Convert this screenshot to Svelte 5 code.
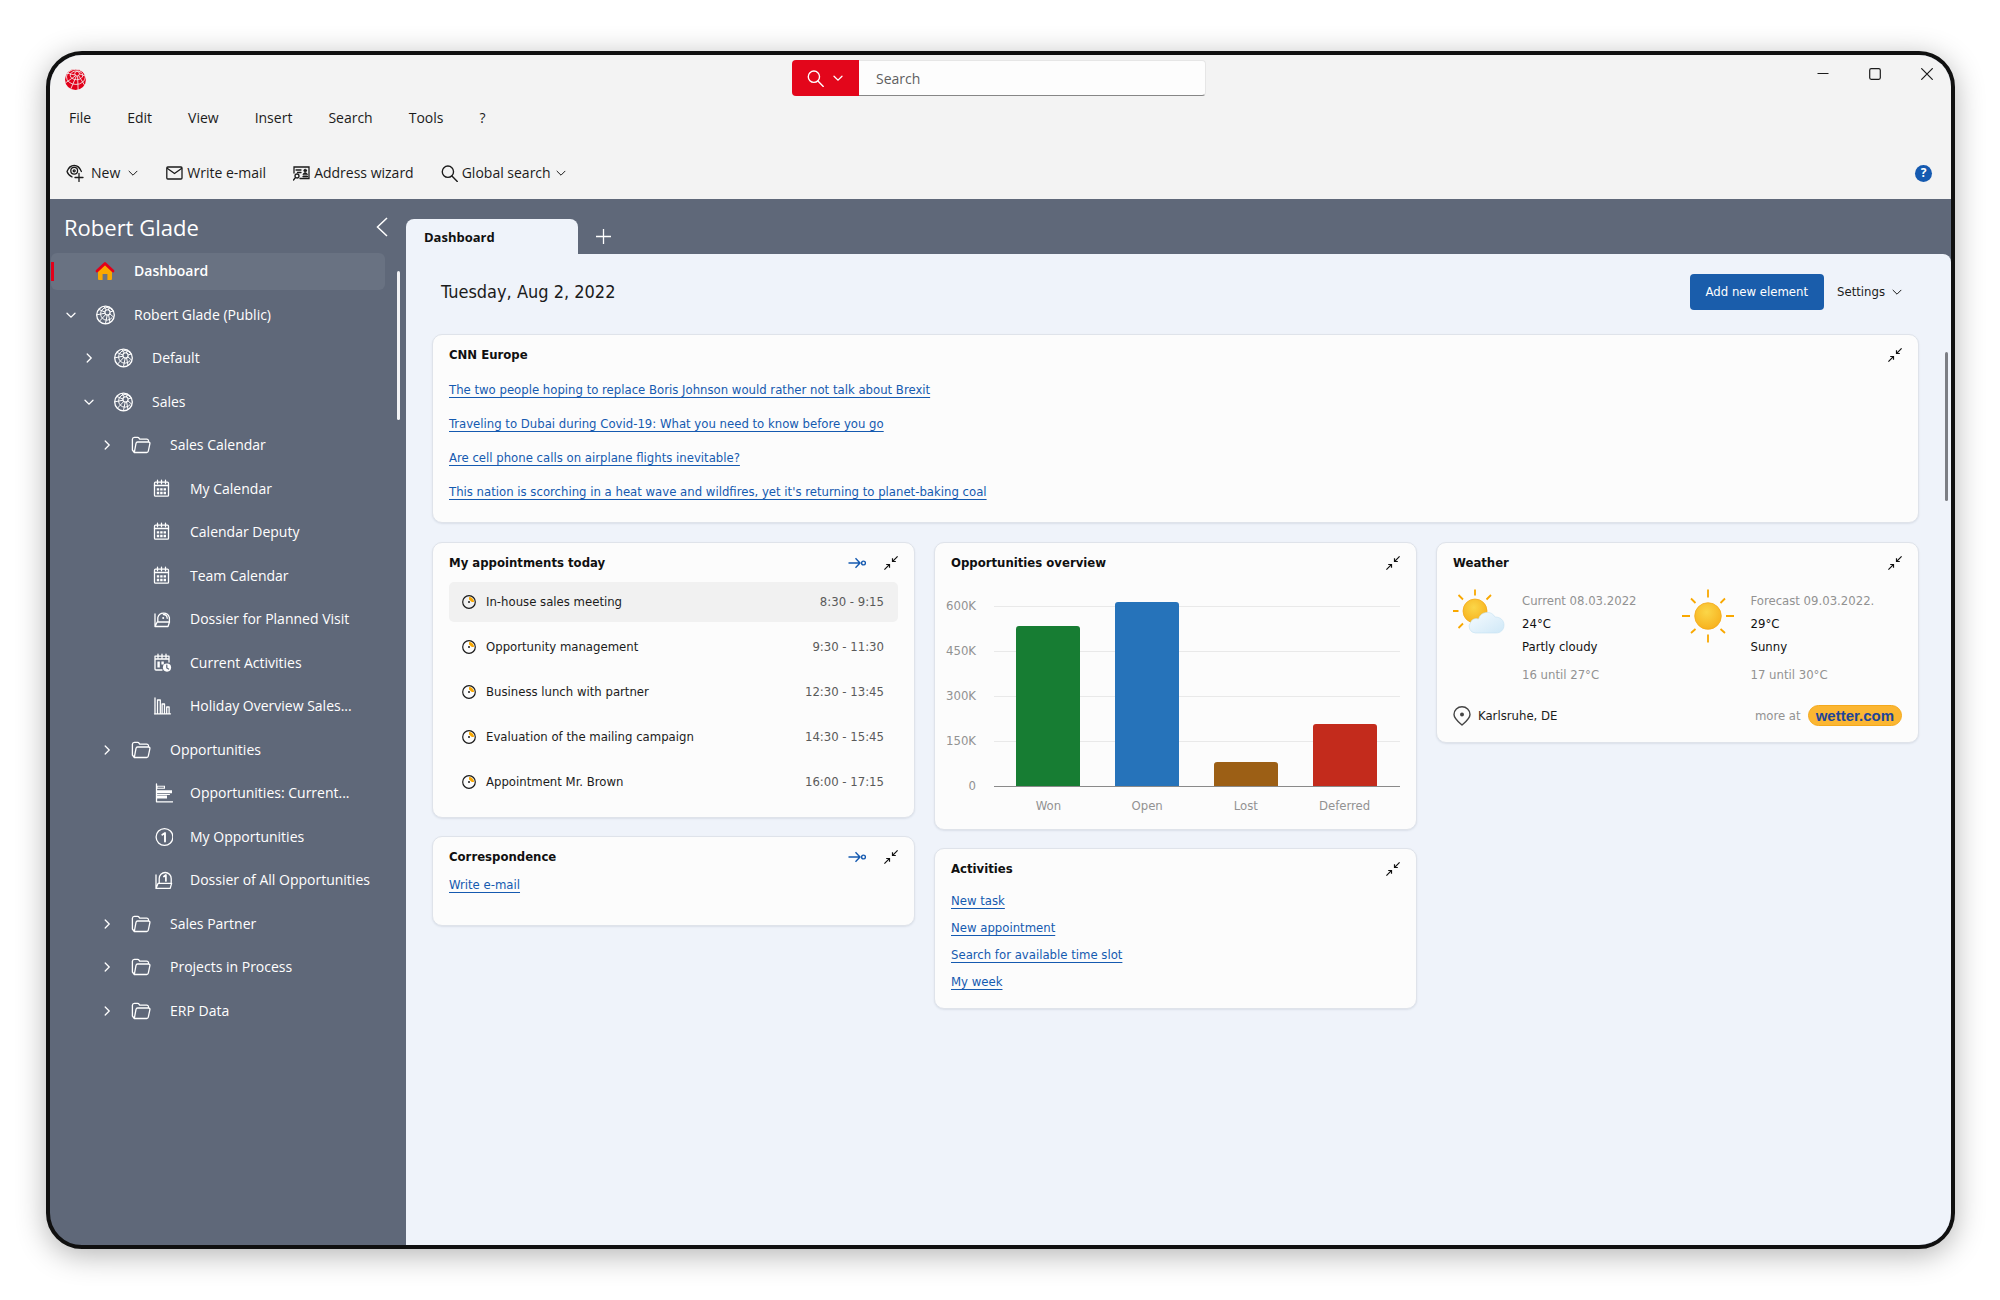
<script lang="ts">
	type IconName =
		| 'home'
		| 'globe'
		| 'folder'
		| 'calendar'
		| 'dossier'
		| 'activities'
		| 'columns'
		| 'bars'
		| 'one'
		| 'dossierOne';

	interface TreeItem {
		label: string;
		icon: IconName;
		level: number;
		state?: 'open' | 'closed';
	}

	const menu = ['File', 'Edit', 'View', 'Insert', 'Search', 'Tools', '?'];

	const tree: TreeItem[] = [
		{ label: 'Dashboard', icon: 'home', level: 0 },
		{ label: 'Robert Glade (Public)', icon: 'globe', level: 0, state: 'open' },
		{ label: 'Default', icon: 'globe', level: 1, state: 'closed' },
		{ label: 'Sales', icon: 'globe', level: 1, state: 'open' },
		{ label: 'Sales Calendar', icon: 'folder', level: 2, state: 'closed' },
		{ label: 'My Calendar', icon: 'calendar', level: 3 },
		{ label: 'Calendar Deputy', icon: 'calendar', level: 3 },
		{ label: 'Team Calendar', icon: 'calendar', level: 3 },
		{ label: 'Dossier for Planned Visit', icon: 'dossier', level: 3 },
		{ label: 'Current Activities', icon: 'activities', level: 3 },
		{ label: 'Holiday Overview Sales...', icon: 'columns', level: 3 },
		{ label: 'Opportunities', icon: 'folder', level: 2, state: 'closed' },
		{ label: 'Opportunities: Current...', icon: 'bars', level: 3 },
		{ label: 'My Opportunities', icon: 'one', level: 3 },
		{ label: 'Dossier of All Opportunities', icon: 'dossierOne', level: 3 },
		{ label: 'Sales Partner', icon: 'folder', level: 2, state: 'closed' },
		{ label: 'Projects in Process', icon: 'folder', level: 2, state: 'closed' },
		{ label: 'ERP Data', icon: 'folder', level: 2, state: 'closed' }
	];

	const news = [
		'The two people hoping to replace Boris Johnson would rather not talk about Brexit',
		'Traveling to Dubai during Covid-19: What you need to know before you go',
		'Are cell phone calls on airplane flights inevitable?',
		"This nation is scorching in a heat wave and wildfires, yet it's returning to planet-baking coal"
	];

	const appointments = [
		{ title: 'In-house sales meeting', time: '8:30 - 9:15' },
		{ title: 'Opportunity management', time: '9:30 - 11:30' },
		{ title: 'Business lunch with partner', time: '12:30 - 13:45' },
		{ title: 'Evaluation of the mailing campaign', time: '14:30 - 15:45' },
		{ title: 'Appointment Mr. Brown', time: '16:00 - 17:15' }
	];

	const axis = ['600K', '450K', '300K', '150K', '0'];
	const chartMax = 600;
	const bars = [
		{ label: 'Won', value: 533, color: '#177d33' },
		{ label: 'Open', value: 614, color: '#2673ba' },
		{ label: 'Lost', value: 80, color: '#9c5f15' },
		{ label: 'Deferred', value: 207, color: '#c32b1c' }
	];

	const activities = ['New task', 'New appointment', 'Search for available time slot', 'My week'];

	let selected = $state('Dashboard');
	let activeAppointment = $state(0);
	let query = $state('');
</script>

{#snippet chevron(dir: 'down' | 'right', cls: string)}
	<svg class={cls} viewBox="0 0 12 12" width="12" height="12" aria-hidden="true">
		<path d={dir === 'down' ? 'M2 4.2 6 8.2 10 4.2' : 'M4.2 2 8.2 6 4.2 10'} />
	</svg>
{/snippet}

{#snippet magnifier(size: number)}
	<svg class="line" viewBox="0 0 16 16" width={size} height={size} aria-hidden="true">
		<circle cx="6.5" cy="6.3" r="5.3" />
		<path d="m10.3 10.3 5 5.2" />
	</svg>
{/snippet}

{#snippet treeIcon(name: IconName)}
	<svg class="tree-icon" viewBox="0 0 20 20" width="20" height="20" aria-hidden="true">
		{#if name === 'home'}
			<path d="M3 10 10 3.5 17 10v8a1 1 0 0 1-1 1h-3.6v-6H7.6v6H4a1 1 0 0 1-1-1z" fill="#f9a800" stroke="none" />
			<path d="M2 10 10 2.4l8 7.6" stroke="#e2001a" stroke-width="2.8" />
		{:else if name === 'globe'}
			<circle cx="10.5" cy="10" r="8.8" />
			<circle cx="12.5" cy="7.4" r="2.6" stroke-width="1.1" />
			<path
				d="M17.4 5.4a6.4 6.4 0 1 0-.4 7.4M9.9 7 4 4.5M9.9 8.2 1.9 9.8M10.8 9.4l-6 6.4M12.2 10.1l-1.7 8.4M13.6 9.9l1.4 7.5M14.8 8.8l3.7 3.2M15.1 7l3-1M13.4 4.9l1-2.8M11.3 5 9 1.6"
				stroke-width="1"
			/>
		{:else if name === 'folder'}
			<path
				d="M3.3 17.5 1.4 15V4.2A2 2 0 0 1 3.4 2.3h3.2q1 0 1.6 1l.5.8h7a1.8 1.8 0 0 1 1.8 1.8v1M3.3 17.5h12.4a1.7 1.7 0 0 0 1.6-1.3l1.6-7.5A1.4 1.4 0 0 0 17.5 7H6.6A1.7 1.7 0 0 0 5 8.3z"
			/>
		{:else if name === 'calendar'}
			<rect x="1.5" y="3.2" width="14" height="14" rx="1" />
			<path d="M1.5 6.5h14M4.5 1.2v3.5M8.5 1.2v3.5M12.5 1.2v3.5" />
			<path
				d="M3.8 10.4h2.4m1 0h2.4m1 0h2.4M3.8 14h2.4m1 0h2.4m1 0h2.4"
				stroke-width="2.4"
				stroke-linecap="butt"
			/>
		{:else if name === 'dossier'}
			<path d="M2 5v12.5h13L16.5 13H4.2L2.3 17M4.8 13V8.6a6 6 0 0 1 11.6 0V13" />
			<path d="M10.4 5.5a4 4 0 0 1 3.8 3.8" />
			<circle cx="10.2" cy="8.9" r="1" fill="currentColor" stroke="none" />
		{:else if name === 'activities'}
			<path d="M9 17H3a1 1 0 0 1-1-1V3.2h14V9M2 6h14M5 1.2v3.5M9 1.2v3.5M13 1.2v3.5" />
			<path d="M5.6 8.5v6M9.6 8.5v3" stroke-width="2.4" stroke-linecap="butt" />
			<circle cx="14" cy="14.6" r="4.1" fill="currentColor" stroke="none" />
			<path d="M13.8 12.2V15l1.8 1" stroke="#5f6879" stroke-width="1.2" />
		{:else if name === 'columns'}
			<path d="M2 2v16M1.5 17.8h16M4.5 17.5V4h2.8v13.5M9.1 17.5V8h2.4v9.5M13.7 17.5V11h2.4v6.5" />
		{:else if name === 'bars'}
			<path d="M3.5 1v17.8h16" />
			<path d="M4 4.2h8M4 8.8h15M4 14h10" stroke-width="3" stroke-linecap="butt" />
			<path d="M5 4.2h5.5" stroke="#5f6879" stroke-width="1" />
			<path d="M3.5 11.5h13" stroke-width="1" />
		{:else if name === 'one'}
			<circle cx="11.5" cy="10" r="8.4" />
			<path d="M9.3 7.8 12 6v8.5" stroke-width="1.9" />
		{:else if name === 'dossierOne'}
			<path d="M3 5v13.4h14.2l1.4-5H5L3.2 18M6.2 13V8.5a6 6 0 0 1 12 0V13" />
			<path d="m10.9 6.5 2-1.5v6" stroke-width="1.7" />
		{/if}
	</svg>
{/snippet}

{#snippet cardHead(title: string, linked: boolean)}
	<header class="card-head">
		<h2>{title}</h2>
		{#if linked}
			<button class="icon-button linked" aria-label="Open {title}">
				<svg viewBox="0 0 18 12" width="18" height="12" aria-hidden="true">
					<path d="M.5 6H12M7.5 1.2 12 6l-4.5 4.8" />
					<circle cx="15.5" cy="6" r="1.9" />
				</svg>
			</button>
		{/if}
		<button class="icon-button" aria-label="Collapse {title}">
			<svg viewBox="0 0 14 14" width="14" height="14" aria-hidden="true">
				<path d="M13.6.4 8.7 5.3M8.5 2.2v3.3h3.3M.4 13.6l4.9-4.9M2.2 8.5h3.3v3.3" />
			</svg>
		</button>
	</header>
{/snippet}

<div class="window">
	<header class="top">
		<div class="titlebar">
			<svg class="logo" viewBox="0 0 20 20" width="21" height="21" aria-hidden="true">
				<circle cx="10" cy="10" r="10" fill="#e2001a" />
				<g fill="none" stroke="#f3f3f3" stroke-width=".8">
					<circle cx="11.5" cy="4.5" r="2.2" />
					<ellipse cx="11" cy="6" rx="6" ry="4.2" />
					<ellipse cx="10.4" cy="7.5" rx="9" ry="7.2" />
					<path d="M10 5.8 2 4M10 6.5.8 13M10.800 6.800 5.500 19M12 6.800 12.500 20M13 6.200l5.500 9M13.500 4.500 20 7" />
				</g>
			</svg>

			<form class="search" role="search" onsubmit={(e) => e.preventDefault()}>
				<button type="submit" aria-label="Search options">
					{@render magnifier(17)}
					{@render chevron('down', 'line')}
				</button>
				<input type="text" placeholder="Search" aria-label="Search" bind:value={query} />
			</form>

			<div class="window-buttons">
				<button aria-label="Minimize">
					<svg viewBox="0 0 12 12" width="12" height="12"><path d="M.5 5.5h11" /></svg>
				</button>
				<button aria-label="Maximize">
					<svg viewBox="0 0 12 12" width="12" height="12">
						<rect x=".7" y=".7" width="10.6" height="10.6" rx="1.5" />
					</svg>
				</button>
				<button aria-label="Close">
					<svg viewBox="0 0 12 12" width="12" height="12"><path d="m.3.3 11.4 11.4M11.7.3.3 11.7" /></svg>
				</button>
			</div>
		</div>

		<nav class="menubar" aria-label="Menu">
			{#each menu as entry}
				<button>{entry}</button>
			{/each}
		</nav>

		<div class="toolbar">
			<button class="new">
				<svg class="line" viewBox="0 0 18 18" width="18" height="18" aria-hidden="true">
					<path d="M1 7.5C2.5 3.5 5.2 1.5 8.2 1.5s5.600 2 7.200 6M1 7.500c1 2.800 2.800 4.500 5 5.400" />
					<circle cx="8.2" cy="6.8" r="3.4" />
					<circle cx="8.2" cy="6.8" r="1" />
					<path d="M13 9.5v8M9 13.5h8" />
				</svg>
				New
				{@render chevron('down', 'line thin')}
			</button>
			<button>
				<svg class="line" viewBox="0 0 17 14" width="17" height="14" aria-hidden="true">
					<rect x=".8" y="1" width="15.2" height="12" rx="1" />
					<path d="m1.5 2.5 7 5 7-5" />
				</svg>
				Write e-mail
			</button>
			<button>
				<svg class="line" viewBox="0 0 17 16" width="17" height="16" aria-hidden="true">
					<path d="M1 8V2h15v11.5H7M3 5h5M4.5 7.5H8M10 11.5h4.5" />
					<path d="M10 9.5c0-2.500 4.400-2.500 4.400 0z" fill="currentColor" stroke-width=".8" />
					<circle cx="12.2" cy="5.6" r="1.4" fill="currentColor" stroke-width=".8" />
					<circle cx="4" cy="11" r="2" />
					<path d="m2.500 12.500-2 2.500" />
				</svg>
				Address wizard
			</button>
			<button>
				{@render magnifier(17)}
				Global search
				{@render chevron('down', 'line thin')}
			</button>
			<button class="help" aria-label="Help">?</button>
		</div>
	</header>

	<div class="body">
		<aside class="sidebar">
			<div class="sidebar-head">
				<h1>Robert Glade</h1>
				<button aria-label="Collapse sidebar">
					<svg viewBox="0 0 12 20" width="12" height="20"><path d="M11 1 1.5 10l9.5 9" /></svg>
				</button>
			</div>
			<ul class="tree">
				{#each tree as item}
					<li>
						<button
							class="tree-row level-{item.level}"
							class:selected={selected === item.label}
							onclick={() => (selected = item.label)}
						>
							<span class="twist">
								{#if item.state}
									{@render chevron(item.state === 'open' ? 'down' : 'right', 'line')}
								{/if}
							</span>
							{@render treeIcon(item.icon)}
							<span class="tree-label">{item.label}</span>
						</button>
					</li>
				{/each}
			</ul>
			<div class="scroll-thumb side-thumb"></div>
		</aside>

		<div class="workspace">
			<div class="tabs" role="tablist">
				<button class="tab" role="tab" aria-selected="true">Dashboard</button>
				<button class="add-tab" aria-label="New tab">
					<svg viewBox="0 0 15 15" width="15" height="15"><path d="M7.5 0v15M0 7.5h15" /></svg>
				</button>
			</div>

			<main>
				<div class="page-head">
					<p class="date">Tuesday, Aug 2, 2022</p>
					<button class="primary">Add new element</button>
					<button class="settings">
						Settings
						{@render chevron('down', 'line thin')}
					</button>
				</div>

				<section class="card">
					{@render cardHead('CNN Europe', false)}
					<ul class="links">
						{#each news as item}
							<li><a href="#news">{item}</a></li>
						{/each}
					</ul>
				</section>

				<div class="columns">
					<div class="column">
						<section class="card">
							{@render cardHead('My appointments today', true)}
							<ul class="appointments">
								{#each appointments as item, i}
									<li>
										<button class:active={activeAppointment === i} onclick={() => (activeAppointment = i)}>
											<svg viewBox="0 0 14 14" width="14" height="14" aria-hidden="true">
												<path d="M7 2a5 5 0 0 1 5 5H9.8L7 4.5z" fill="#f9a800" />
												<circle cx="7" cy="7" r="6.3" fill="none" stroke="#1b1b1b" stroke-width="1.2" />
												<circle cx="7" cy="7" r="1" fill="#1b1b1b" />
											</svg>
											<span class="what">{item.title}</span>
											<span class="time">{item.time}</span>
										</button>
									</li>
								{/each}
							</ul>
						</section>

						<section class="card">
							{@render cardHead('Correspondence', true)}
							<ul class="links single">
								<li><a href="#mail">Write e-mail</a></li>
							</ul>
						</section>
					</div>

					<div class="column">
						<section class="card">
							{@render cardHead('Opportunities overview', false)}
							<div class="chart">
								<div class="axis">
									{#each axis as tick}
										<span>{tick}</span>
									{/each}
								</div>
								<div class="plot">
									{#each bars as bar}
										<div class="slot">
											<div class="bar" style="height: {(bar.value / chartMax) * 100}%; background: {bar.color}"></div>
										</div>
									{/each}
								</div>
								<div class="bar-labels">
									{#each bars as bar}
										<span>{bar.label}</span>
									{/each}
								</div>
							</div>
						</section>

						<section class="card">
							{@render cardHead('Activities', false)}
							<ul class="links tight">
								{#each activities as item}
									<li><a href="#activity">{item}</a></li>
								{/each}
							</ul>
						</section>
					</div>

					<div class="column">
						<section class="card">
							{@render cardHead('Weather', false)}
							<div class="weather">
								<div class="report">
									<svg viewBox="0 0 52 54" width="52" height="54" aria-hidden="true">
										<defs>
											<radialGradient id="sun" cx=".45" cy=".35" r=".65">
												<stop offset="0" stop-color="#fbd648" />
												<stop offset="1" stop-color="#f7b21f" />
											</radialGradient>
											<linearGradient id="cloud" x1="0" x2="1" y2="1">
												<stop offset="0" stop-color="#f6fbff" />
												<stop offset="1" stop-color="#cfe8f7" />
											</linearGradient>
										</defs>
										<path d="M22 .5v6M5.5 6l4.5 4.5M38 6l-4.5 4.5M0 22h5.5M5.5 39l4.5-4.5" class="rays" />
										<circle cx="22" cy="22" r="12" fill="url(#sun)" stroke="#f4a91c" stroke-width=".8" />
										<path
											d="M22.5 44a6.5 6.5 0 0 1-5-10.500 6.200 6.200 0 0 1 8-3.500 9 9 0 0 1 16.500-2c5.500 0 9 3.300 9 8 0 4.800-3.300 8-8 8z"
											fill="url(#cloud)"
											stroke="#c3e0f2"
											stroke-width=".6"
										/>
									</svg>
									<div>
										<p class="muted">Current 08.03.2022</p>
										<p>24°C</p>
										<p>Partly cloudy</p>
										<p class="muted range">16 until 27°C</p>
									</div>
								</div>
								<div class="report">
									<svg viewBox="0 0 52 54" width="52" height="54" aria-hidden="true">
										<path
											d="M26 .5v8M26 45.5v8M0 27h8M44 27h8M9 9.5l4.500 4.500M43 9.500 38.500 14M9 44l4.500-4M43 44l-4.500-4"
											class="rays"
										/>
										<circle cx="26" cy="27" r="13.3" fill="url(#sun)" stroke="#f4a91c" stroke-width=".8" />
									</svg>
									<div>
										<p class="muted">Forecast 09.03.2022.</p>
										<p>29°C</p>
										<p>Sunny</p>
										<p class="muted range">17 until 30°C</p>
									</div>
								</div>
							</div>
							<footer class="weather-foot">
								<svg viewBox="0 0 18 20" width="18" height="20" aria-hidden="true">
									<path
										d="M9 19C5 15.5 1 12.5 1 8.5a8 7.700 0 0 1 16 0c0 4-4 7-8 10.500z"
										fill="none"
										stroke="#444"
										stroke-width="1.4"
									/>
									<circle cx="9" cy="8.500" r="2" fill="#444" />
								</svg>
								<span>Karlsruhe, DE</span>
								<span class="more">more at</span>
								<a class="brand" href="#wetter">wetter.com</a>
							</footer>
						</section>
					</div>
				</div>
				<div class="scroll-thumb main-thumb"></div>
			</main>
		</div>
	</div>
</div>

<style>
	:global(body) {
		margin: 0;
		background: #fff;
	}

	.window {
		box-sizing: border-box;
		display: flex;
		flex-direction: column;
		margin: 51px 45px 51px 46px;
		min-height: calc(100vh - 102px);
		border: 4px solid #101010;
		border-radius: 36px;
		background: #5f6879;
		box-shadow: 0 6px 30px rgba(0, 0, 0, 0.3);
		overflow: hidden;
		font-family: 'Open Sans', 'Noto Sans', sans-serif;
		font-size: 14px;
		line-height: 20px;
		color: #1b1b1b;
	}

	button {
		margin: 0;
		padding: 0;
		border: none;
		background: none;
		font: inherit;
		color: inherit;
		cursor: pointer;
	}

	svg {
		display: block;
		flex: none;
	}

	ul {
		margin: 0;
		padding: 0;
		list-style: none;
	}

	p,
	h1,
	h2 {
		margin: 0;
	}

	.line {
		fill: none;
		stroke: currentColor;
		stroke-width: 1.3;
		stroke-linecap: round;
	}

	.thin {
		stroke-width: 1;
	}

	/* Title bar, menu and toolbar */
	.top {
		background: #f3f3f3;
		padding-bottom: 16px;
	}

	.titlebar {
		display: grid;
		grid-template-columns: 1fr 414px 1fr;
		padding: 5px 18px 0 15px;
	}

	.logo {
		margin-top: 9px;
	}

	.search {
		display: flex;
		height: 36px;
	}

	.search button {
		display: flex;
		align-items: center;
		justify-content: center;
		gap: 8px;
		width: 67px;
		border-radius: 4px 0 0 4px;
		background: #e3061b;
		color: #fff;
	}

	.search input {
		box-sizing: border-box;
		flex: 1;
		min-width: 0;
		padding: 2px 17px 0;
		border: 1px solid #e6e6e6;
		border-left: none;
		border-bottom-color: #868686;
		border-radius: 0 4px 4px 0;
		background: #fdfdfd;
		font: inherit;
		color: #1b1b1b;
	}

	.search input::placeholder {
		color: #5f5f5f;
		opacity: 1;
	}

	.window-buttons {
		display: flex;
		justify-content: flex-end;
		align-items: flex-start;
		gap: 40px;
		padding-top: 8px;
	}

	.window-buttons svg {
		fill: none;
		stroke: #1b1b1b;
		stroke-width: 1.2;
	}

	.menubar {
		display: flex;
		gap: 36px;
		padding: 12px 19px 0;
	}

	.toolbar {
		display: flex;
		align-items: center;
		gap: 27px;
		padding: 35px 19px 0 16px;
	}

	.toolbar button {
		display: flex;
		align-items: center;
		gap: 4px;
	}

	.toolbar .new {
		gap: 7px;
	}

	.toolbar .help {
		justify-content: center;
		margin-left: auto;
		width: 17px;
		height: 17px;
		border-radius: 50%;
		background: #155ab0;
		color: #fff;
		font-size: 12px;
		font-weight: 700;
	}

	.body {
		flex: 1;
		display: flex;
	}

	/* Navigation tree */
	.sidebar {
		position: relative;
		box-sizing: border-box;
		flex: none;
		width: 356px;
		color: #fff;
	}

	.sidebar-head {
		display: flex;
		align-items: center;
		justify-content: space-between;
		height: 30px;
		padding: 13px 18px 7px 14px;
	}

	.sidebar-head h1 {
		font-size: 22px;
		line-height: 30px;
		font-weight: 400;
	}

	.sidebar-head svg {
		fill: none;
		stroke: #fff;
		stroke-width: 1.5;
	}

	.tree {
		padding: 0 21px 0 1px;
	}

	.tree li {
		display: flex;
		align-items: center;
		height: 44px;
	}

	.tree li:nth-child(even) {
		height: 43px;
	}

	.tree-row {
		display: flex;
		align-items: center;
		width: 100%;
		height: 37px;
		border-radius: 6px;
		text-align: left;
		white-space: nowrap;
		padding-left: 14px;
	}

	.tree-row.level-1 {
		padding-left: 32px;
	}

	.tree-row.level-2 {
		padding-left: 50px;
	}

	.tree-row.level-3 {
		padding-left: 72px;
	}

	.twist {
		width: 30px;
	}

	.tree-label {
		margin-left: 19px;
	}

	.level-3 .tree-label {
		margin-left: 17px;
	}

	.tree-row.selected {
		background: linear-gradient(#e2001a, #e2001a) left center / 3px 19px no-repeat #697282;
		font-weight: 600;
	}

	.tree-icon {
		fill: none;
		stroke: currentColor;
		stroke-width: 1.3;
		stroke-linecap: round;
		stroke-linejoin: round;
	}

	.scroll-thumb {
		position: absolute;
		width: 3px;
		border-radius: 2px;
	}

	.side-thumb {
		top: 72px;
		right: 6px;
		height: 149px;
		background: #f2f3f5;
	}

	/* Tabs */
	.workspace {
		flex: 1;
		min-width: 0;
		display: flex;
		flex-direction: column;
	}

	.tabs {
		display: flex;
		padding-top: 20px;
		height: 35px;
	}

	.tab {
		width: 172px;
		padding: 0 18px;
		border-radius: 8px 8px 0 0;
		background: #eff3fa;
		font-size: 13px;
		font-weight: 700;
		text-align: left;
		color: #101010;
	}

	.add-tab {
		width: 51px;
		display: grid;
		place-items: center;
	}

	.add-tab svg {
		fill: none;
		stroke: #fff;
		stroke-width: 1.3;
	}

	/* Dashboard */
	main {
		position: relative;
		flex: 1;
		padding: 20px 32px 20px 26px;
		border-radius: 0 8px 0 0;
		background: #eff3fa;
		font-family: 'DejaVu Sans Condensed', 'Noto Sans', sans-serif;
		font-size: 13px;
	}

	.main-thumb {
		top: 98px;
		right: 3px;
		height: 149px;
		background: #7c7e84;
	}

	.page-head {
		display: flex;
		align-items: center;
		gap: 13px;
		height: 36px;
		padding: 0 16px 0 9px;
		margin-bottom: 24px;
	}

	.date {
		flex: 1;
		font-size: 18px;
		line-height: 24px;
	}

	.primary {
		height: 36px;
		padding: 0 16px;
		border-radius: 4px;
		background: #1a5dab;
		color: #fff;
	}

	.settings {
		display: flex;
		align-items: center;
		gap: 6px;
	}

	.card {
		box-sizing: border-box;
		min-height: 90px;
		padding: 10px 16px 13px;
		border: 1px solid #dfe3ea;
		border-radius: 10px;
		background: #fcfcfc;
		box-shadow: 0 1px 2px rgba(40, 60, 90, 0.1);
	}

	.card-head {
		display: flex;
		align-items: center;
		gap: 18px;
	}

	.card-head h2 {
		flex: 1;
		font-size: 13px;
		line-height: 20px;
		font-weight: 700;
		color: #101010;
	}

	.icon-button svg {
		fill: none;
		stroke: #101010;
		stroke-width: 1.2;
	}

	.icon-button.linked svg {
		stroke: #155ab0;
		stroke-width: 1.4;
	}

	.links {
		margin-top: 8px;
	}

	.links li {
		line-height: 34px;
	}

	.links.tight li {
		line-height: 27px;
	}

	.links.single li {
		line-height: 20px;
	}

	.links a {
		color: #155ab0;
		text-decoration: underline;
		text-decoration-skip-ink: none;
		text-underline-offset: 3px;
	}

	.columns {
		display: grid;
		grid-template-columns: repeat(3, minmax(0, 1fr));
		gap: 19px;
		margin-top: 19px;
	}

	.column {
		display: flex;
		flex-direction: column;
		gap: 18px;
	}

	.appointments {
		display: flex;
		flex-direction: column;
		gap: 5px;
		margin-top: 9px;
		padding-bottom: 2px;
	}

	.appointments button {
		box-sizing: border-box;
		display: flex;
		align-items: center;
		gap: 10px;
		width: 100%;
		height: 40px;
		padding: 0 14px 0 13px;
		border-radius: 5px;
		text-align: left;
	}

	.appointments button.active {
		background: #f1f1f1;
	}

	.what {
		flex: 1;
	}

	.time {
		color: #5a5a5a;
	}

	/* Bar chart */
	.chart {
		display: grid;
		grid-template-columns: 30px 1fr;
		column-gap: 18px;
		margin: 23px 0 0 -5px;
		color: #929292;
	}

	.axis {
		display: flex;
		flex-direction: column;
		gap: 25px;
		text-align: right;
	}

	.plot {
		display: flex;
		align-items: flex-end;
		margin: 10px 0 9px;
		height: 180px;
		padding: 0 6px 0 5px;
		border-bottom: 1px solid #8a8a8a;
		background: repeating-linear-gradient(#e9e9e9 0 1px, transparent 1px 45px);
	}

	.slot {
		flex: 1;
		height: 100%;
		display: flex;
		align-items: flex-end;
		justify-content: center;
	}

	.bar {
		width: 64px;
		flex: none;
		border-radius: 3px 3px 0 0;
	}

	.bar-labels {
		grid-column: 2;
		display: flex;
		padding: 0 6px 0 5px;
	}

	.bar-labels span {
		flex: 1;
		text-align: center;
	}

	/* Weather */
	.weather {
		display: grid;
		grid-template-columns: 1fr 1fr;
		gap: 8px;
		margin-top: 16px;
		line-height: 23px;
		color: #101010;
	}

	.report {
		display: flex;
		gap: 17px;
		white-space: nowrap;
	}

	.rays {
		fill: none;
		stroke: #f9a800;
		stroke-width: 1.8;
	}

	.muted {
		color: #929292;
	}

	.range {
		margin-top: 5px;
	}

	.weather-foot {
		display: flex;
		align-items: center;
		gap: 7px;
		margin-top: 19px;
		padding-bottom: 3px;
	}

	.more {
		margin-left: auto;
		color: #929292;
	}

	.brand {
		padding: 0 7px;
		border: 1px solid #f4a91c;
		border-radius: 11px;
		background: #fbb632;
		font-family: 'Liberation Sans', sans-serif;
		font-size: 15px;
		font-weight: 700;
		line-height: 19px;
		color: #1e4598;
		text-decoration: none;
	}
</style>
